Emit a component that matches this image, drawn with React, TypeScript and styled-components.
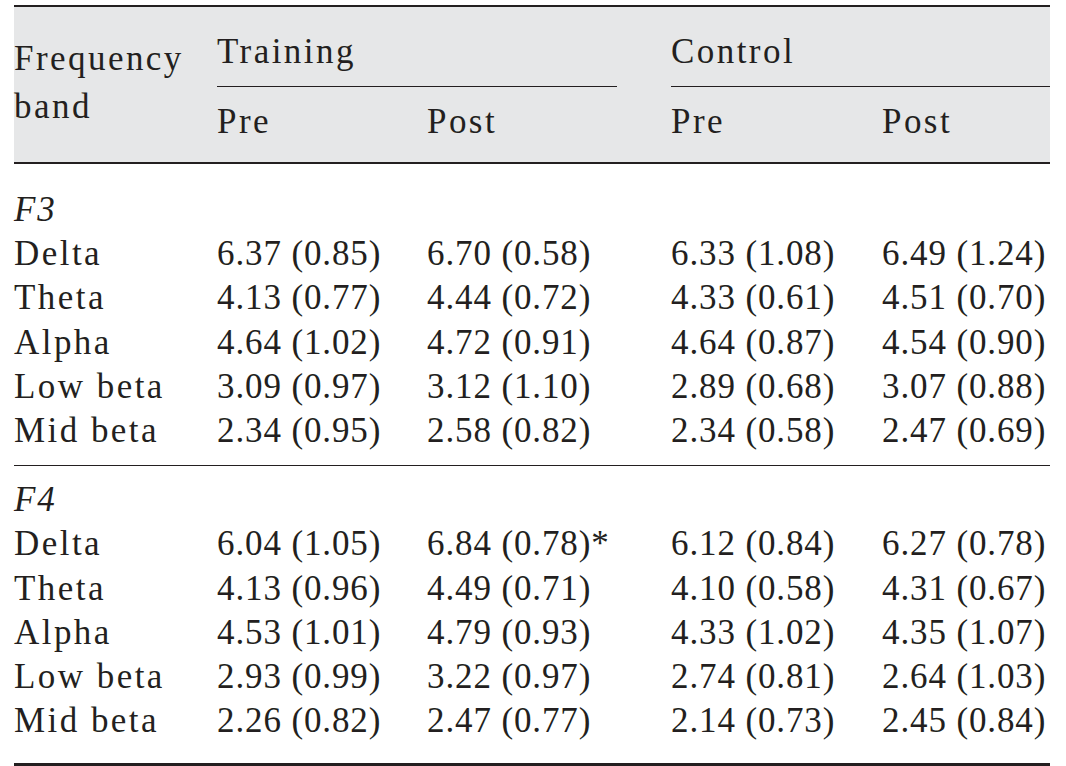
import React from "react";
import styled, { createGlobalStyle } from "styled-components";

const ink = "#231f20";
const cols = "203px 210px 244px 211px 168px";

const Global = createGlobalStyle`
  html, body { margin: 0; padding: 0; background: #ffffff; }
  body { font-family: "Liberation Serif", "Times New Roman", serif; color: ${ink}; }
`;

const Table = styled.div`
  margin: 5px 0 0 14px;
  width: 1036px;
  border-top: 2px solid ${ink};
  border-bottom: 3px solid ${ink};
  font-size: 35px;
`;

const Head = styled.div`
  display: grid;
  grid-template-columns: ${cols};
  background: #e6e7e8;
  border-bottom: 2px solid ${ink};
`;

const Stub = styled.div`
  grid-row: 1 / 3;
  grid-column: 1;
  padding-top: 28px;
  line-height: 48px;
  letter-spacing: 0.07em;
`;

const Spanner = styled.div<{ $col: string; $trim: number }>`
  grid-row: 1;
  grid-column: ${(p) => p.$col};
  margin-right: ${(p) => p.$trim}px;
  padding: 23px 0 12px;
  line-height: 44px;
  border-bottom: 1px solid ${ink};
  letter-spacing: 0.07em;
`;

const SubHead = styled.div<{ $col: number }>`
  grid-row: 2;
  grid-column: ${(p) => p.$col};
  padding: 13px 0 18px;
  line-height: 44px;
  letter-spacing: 0.07em;
`;

const Section = styled.div<{ $last?: boolean }>`
  padding: ${(p) => (p.$last ? "12px 0 20px" : "24px 0 12px")};
  border-bottom: ${(p) => (p.$last ? "none" : `1px solid ${ink}`)};
`;

const Row = styled.div`
  display: grid;
  grid-template-columns: ${cols};
  line-height: 44.2px;
  white-space: nowrap;
`;

const Group = styled.div`
  font-style: italic;
  line-height: 44.2px;
  letter-spacing: 0.05em;
`;

const Label = styled.div`
  letter-spacing: 0.07em;
`;

const Value = styled.div`
  letter-spacing: 0.025em;
`;

type Data = [string, string[]][];

const f3: Data = [
  ["Delta", ["6.37 (0.85)", "6.70 (0.58)", "6.33 (1.08)", "6.49 (1.24)"]],
  ["Theta", ["4.13 (0.77)", "4.44 (0.72)", "4.33 (0.61)", "4.51 (0.70)"]],
  ["Alpha", ["4.64 (1.02)", "4.72 (0.91)", "4.64 (0.87)", "4.54 (0.90)"]],
  ["Low beta", ["3.09 (0.97)", "3.12 (1.10)", "2.89 (0.68)", "3.07 (0.88)"]],
  ["Mid beta", ["2.34 (0.95)", "2.58 (0.82)", "2.34 (0.58)", "2.47 (0.69)"]],
];

const f4: Data = [
  ["Delta", ["6.04 (1.05)", "6.84 (0.78)*", "6.12 (0.84)", "6.27 (0.78)"]],
  ["Theta", ["4.13 (0.96)", "4.49 (0.71)", "4.10 (0.58)", "4.31 (0.67)"]],
  ["Alpha", ["4.53 (1.01)", "4.79 (0.93)", "4.33 (1.02)", "4.35 (1.07)"]],
  ["Low beta", ["2.93 (0.99)", "3.22 (0.97)", "2.74 (0.81)", "2.64 (1.03)"]],
  ["Mid beta", ["2.26 (0.82)", "2.47 (0.77)", "2.14 (0.73)", "2.45 (0.84)"]],
];

function Block({ title, data, last }: { title: string; data: Data; last?: boolean }) {
  return (
    <Section $last={last}>
      <Group>{title}</Group>
      {data.map(([name, vals]) => (
        <Row key={name}>
          <Label>{name}</Label>
          {vals.map((v, i) => (
            <Value key={i}>{v}</Value>
          ))}
        </Row>
      ))}
    </Section>
  );
}

export default function App() {
  return (
    <>
      <Global />
      <Table>
        <Head>
          <Stub>
            Frequency
            <br />
            band
          </Stub>
          <Spanner $col="2 / 4" $trim={54}>Training</Spanner>
          <Spanner $col="4 / 6" $trim={0}>Control</Spanner>
          <SubHead $col={2}>Pre</SubHead>
          <SubHead $col={3}>Post</SubHead>
          <SubHead $col={4}>Pre</SubHead>
          <SubHead $col={5}>Post</SubHead>
        </Head>
        <Block title="F3" data={f3} />
        <Block title="F4" data={f4} last />
      </Table>
    </>
  );
}
